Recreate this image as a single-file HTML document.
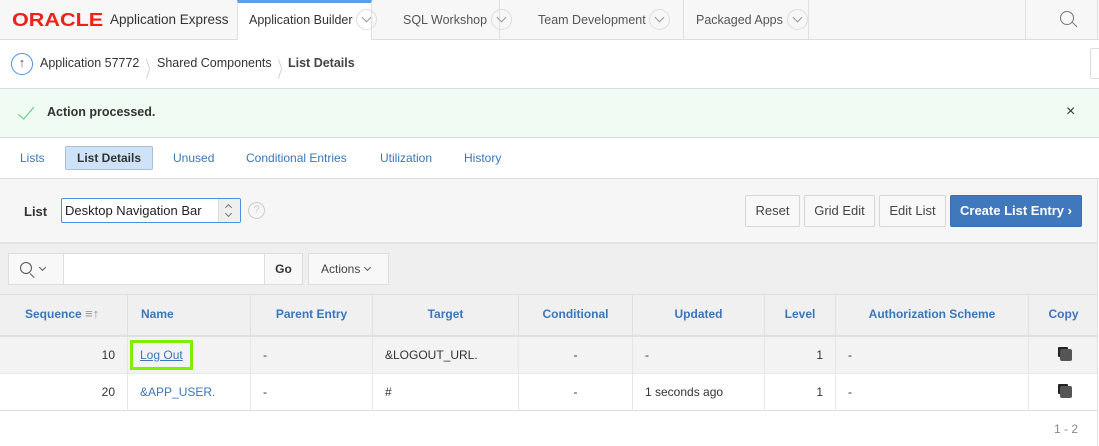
<!DOCTYPE html>
<html><head><style>
*{box-sizing:border-box;margin:0;padding:0}
body{width:1099px;height:446px;overflow:hidden;background:#fff;font-family:"Liberation Sans",Arial,sans-serif;font-size:13px;color:#333;position:relative}
.a{position:absolute;white-space:nowrap}
.tab{position:absolute;top:0;height:39px;border-right:1px solid #e0e0e0;line-height:40px;font-size:12.5px;color:#555;white-space:nowrap}
.dd{position:absolute;top:9px;width:21px;height:21px;border:1px solid #ddd;border-radius:50%}
.dd:after{content:"";position:absolute;left:6px;top:4px;width:6px;height:6px;border-right:1px solid #999;border-bottom:1px solid #999;transform:rotate(45deg)}
.btn{position:absolute;top:195px;height:32px;border:1px solid #d6d6d6;background:#f8f8f8;border-radius:2px;line-height:30px;text-align:center;color:#444;font-size:13px;white-space:nowrap}
.th{position:absolute;top:294px;height:42px;line-height:40px;font-weight:bold;color:#3a76bb;font-size:12px;text-align:center;border-left:1px solid #e0e0e0;white-space:nowrap}
.td{position:absolute;height:37px;line-height:36px;font-size:12px;color:#333;border-left:1px solid #e6e6e6;padding:0 12px;white-space:nowrap}
.cp{position:absolute;width:12px;height:12px;background:#555;border-radius:2px;box-shadow:-3px -3px 0 -1px #222}
</style></head><body>
<div class="a" style="left:0;top:0;width:1099px;height:40px;background:#f7f7f7;border-bottom:1px solid #ddd"></div>
<div class="a" style="left:12px;top:10px;font-size:18px;font-weight:bold;color:#f0201a;transform:scaleX(1.2);transform-origin:left">ORACLE</div>
<div class="a" style="left:110px;top:12px;font-size:13.5px;color:#333">Application Express</div>
<div class="a" style="left:237px;top:0;width:135px;height:40px;background:#fff;border-left:1px solid #e0e0e0;border-right:1px solid #e0e0e0;border-top:3px solid #5b9de6"></div>
<div class="tab" style="left:249px;border:0;color:#333">Application Builder</div>
<div class="dd" style="left:356px"></div>
<div class="a" style="left:499px;top:0;width:1px;height:39px;background:#e0e0e0"></div>
<div class="tab" style="left:403px;border:0">SQL Workshop</div>
<div class="dd" style="left:491px"></div>
<div class="a" style="left:683px;top:0;width:1px;height:39px;background:#e0e0e0"></div>
<div class="tab" style="left:538px;border:0">Team Development</div>
<div class="dd" style="left:649px"></div>
<div class="a" style="left:808px;top:0;width:1px;height:39px;background:#e0e0e0"></div>
<div class="tab" style="left:696px;border:0">Packaged Apps</div>
<div class="dd" style="left:787px"></div>
<div class="a" style="left:1025px;top:0;width:1px;height:39px;background:#e0e0e0"></div>
<div class="a" style="left:1060px;top:11px;width:14px;height:14px;border:1.3px solid #777;border-radius:50%"></div>
<div class="a" style="left:1071px;top:24px;width:7px;height:1.3px;background:#777;transform:rotate(45deg)"></div>
<div class="a" style="left:1097px;top:0;width:1px;height:39px;background:#e0e0e0"></div>
<div class="a" style="left:0;top:40px;width:1099px;height:49px;border-bottom:1px solid #ddd;background:#fff"></div>
<div class="a" style="left:11px;top:53px;width:22px;height:22px;border:1.5px solid #4a90e2;border-radius:50%;text-align:center;line-height:18px;color:#555;font-size:13px">↑</div>
<div class="a" style="left:40px;top:56px;color:#333;font-size:12.5px">Application 57772</div>
<div class="a" style="left:140px;top:52px;color:#ccc;font-size:22px;transform:scaleX(.5)">〉</div>
<div class="a" style="left:157px;top:56px;color:#333;font-size:12.5px">Shared Components</div>
<div class="a" style="left:272px;top:52px;color:#ccc;font-size:22px;transform:scaleX(.5)">〉</div>
<div class="a" style="left:288px;top:56px;color:#444;font-weight:bold;font-size:12.5px">List Details</div>
<div class="a" style="left:1090px;top:48px;width:12px;height:31px;border:1px solid #ddd;border-radius:2px"></div>
<div class="a" style="left:0;top:89px;width:1099px;height:49px;background:#f0fbf3;border-bottom:1px solid #ddd"></div>
<div class="a" style="left:22px;top:103px;width:8px;height:16px;border-right:1.5px solid #5fcf70;border-bottom:1.5px solid #5fcf70;transform:rotate(40deg)"></div>
<div class="a" style="left:47px;top:105px;font-weight:bold;color:#333;font-size:12.5px">Action processed.</div>
<div class="a" style="left:1066px;top:103px;font-size:16px;color:#333">×</div>
<div class="a" style="left:0;top:138px;width:1099px;height:41px;background:#fff;border-bottom:1px solid #ddd"></div>
<div class="a" style="left:20px;top:151px;color:#3a76bb;font-size:12px">Lists</div>
<div class="a" style="left:65px;top:146px;width:88px;height:24px;background:#cfe3f8;border:1px solid #a9bfd7;border-radius:2px;text-align:center;line-height:22px;font-weight:bold;color:#333;font-size:12px">List Details</div>
<div class="a" style="left:173px;top:151px;color:#3a76bb;font-size:12px">Unused</div>
<div class="a" style="left:246px;top:151px;color:#3a76bb;font-size:12px">Conditional Entries</div>
<div class="a" style="left:380px;top:151px;color:#3a76bb;font-size:12px">Utilization</div>
<div class="a" style="left:464px;top:151px;color:#3a76bb;font-size:12px">History</div>
<div class="a" style="left:0;top:179px;width:1098px;height:65px;background:#f6f6f6;border-bottom:2px solid #e4e4e4;border-right:1px solid #e0e0e0"></div>
<div class="a" style="left:24px;top:204px;font-weight:bold;color:#333">List</div>
<div class="a" style="left:61px;top:198px;width:180px;height:25px;border:1px solid #4a90e2;background:#fff;border-radius:2px"></div>
<div class="a" style="left:65px;top:203px;font-size:13px;color:#222">Desktop Navigation Bar</div>
<div class="a" style="left:218px;top:199px;width:22px;height:23px;background:#efefef;border-left:1px solid #ddd"></div>
<div class="a" style="left:226px;top:205px;width:5px;height:5px;border-left:1px solid #777;border-top:1px solid #777;transform:rotate(45deg)"></div>
<div class="a" style="left:226px;top:211px;width:5px;height:5px;border-right:1px solid #777;border-bottom:1px solid #777;transform:rotate(45deg)"></div>
<div class="a" style="left:248px;top:202px;width:17px;height:17px;border:1px solid #ccc;border-radius:50%;text-align:center;line-height:15px;font-size:11px;color:#ccc">?</div>
<div class="btn" style="left:745px;width:55px">Reset</div>
<div class="btn" style="left:804px;width:71px">Grid Edit</div>
<div class="btn" style="left:879px;width:67px">Edit List</div>
<div class="btn" style="left:950px;width:132px;background:#3f78bd;border-color:#3a70b0;color:#fff;font-weight:bold">Create List Entry ›</div>
<div class="a" style="left:0;top:244px;width:1098px;height:50px;background:#efefef;border-right:1px solid #e0e0e0"></div>
<div class="a" style="left:8px;top:253px;width:295px;height:32px;border:1px solid #ddd;background:#fff;border-radius:2px"></div>
<div class="a" style="left:8px;top:253px;width:56px;height:32px;border:1px solid #ddd;background:#f8f8f8"></div>
<div class="a" style="left:20px;top:262px;width:12px;height:12px;border:1.3px solid #555;border-radius:50%"></div>
<div class="a" style="left:29px;top:275px;width:6px;height:1.3px;background:#555;transform:rotate(45deg)"></div>
<div class="a" style="left:40px;top:265px;width:5px;height:5px;border-right:1px solid #555;border-bottom:1px solid #555;transform:rotate(45deg)"></div>
<div class="a" style="left:264px;top:253px;width:39px;height:32px;border:1px solid #ddd;background:#f8f8f8;text-align:center;line-height:30px;font-weight:bold;font-size:12px;color:#333">Go</div>
<div class="a" style="left:308px;top:253px;width:81px;height:32px;border:1px solid #ddd;background:#f8f8f8;line-height:30px;font-size:12px;color:#444;padding-left:12px">Actions</div>
<div class="a" style="left:365px;top:265px;width:5px;height:5px;border-right:1px solid #555;border-bottom:1px solid #555;transform:rotate(45deg)"></div>
<div class="a" style="left:0;top:294px;width:1098px;height:43px;background:#f0f0f0;border-top:1px solid #e0e0e0;border-bottom:2px solid #e0e0e0;border-right:1px solid #e0e0e0"></div>
<div class="th" style="left:0;width:127px;border-left:0;text-align:left;padding-left:25px">Sequence <span style="color:#999;font-weight:normal;font-size:13px">≡↑</span></div>
<div class="th" style="left:127px;width:123px;text-align:left;padding-left:13px">Name</div>
<div class="th" style="left:250px;width:122px">Parent Entry</div>
<div class="th" style="left:372px;width:146px">Target</div>
<div class="th" style="left:518px;width:114px">Conditional</div>
<div class="th" style="left:632px;width:132px">Updated</div>
<div class="th" style="left:764px;width:71px">Level</div>
<div class="th" style="left:835px;width:193px">Authorization Scheme</div>
<div class="th" style="left:1028px;width:70px">Copy</div>
<div class="a" style="left:0;top:337px;width:1098px;height:37px;background:#f3f3f3;border-bottom:1px solid #e8e8e8;border-right:1px solid #e0e0e0"></div>
<div class="a" style="left:0;top:374px;width:1098px;height:37px;background:#fff;border-bottom:1px solid #ddd;border-right:1px solid #e0e0e0"></div>
<div class="td" style="left:0;top:337px;width:127px;border-left:0;text-align:right">10</div>
<div class="td" style="left:127px;top:337px;width:123px"></div>
<div class="a" style="left:130px;top:340px;width:63px;height:30px;border:3px solid #7cf000"></div>
<div class="a" style="left:140px;top:348px;font-size:12px;color:#3a76bb;text-decoration:underline">Log Out</div>
<div class="td" style="left:250px;top:337px;width:122px">-</div>
<div class="td" style="left:372px;top:337px;width:146px">&amp;LOGOUT_URL.</div>
<div class="td" style="left:518px;top:337px;width:114px;text-align:center">-</div>
<div class="td" style="left:632px;top:337px;width:132px">-</div>
<div class="td" style="left:764px;top:337px;width:71px;text-align:right">1</div>
<div class="td" style="left:835px;top:337px;width:193px">-</div>
<div class="td" style="left:1028px;top:337px;width:70px"></div>
<div class="cp" style="left:1060px;top:349px"></div>
<div class="td" style="left:0;top:374px;width:127px;border-left:0;text-align:right">20</div>
<div class="td" style="left:127px;top:374px;width:123px;color:#3a76bb">&amp;APP_USER.</div>
<div class="td" style="left:250px;top:374px;width:122px">-</div>
<div class="td" style="left:372px;top:374px;width:146px">#</div>
<div class="td" style="left:518px;top:374px;width:114px;text-align:center">-</div>
<div class="td" style="left:632px;top:374px;width:132px">1 seconds ago</div>
<div class="td" style="left:764px;top:374px;width:71px;text-align:right">1</div>
<div class="td" style="left:835px;top:374px;width:193px">-</div>
<div class="td" style="left:1028px;top:374px;width:70px"></div>
<div class="cp" style="left:1060px;top:386px"></div>
<div class="a" style="left:1097px;top:411px;width:1px;height:35px;background:#e0e0e0"></div>
<div class="a" style="left:1054px;top:422px;font-size:12px;color:#888">1 - 2</div>
</body></html>
